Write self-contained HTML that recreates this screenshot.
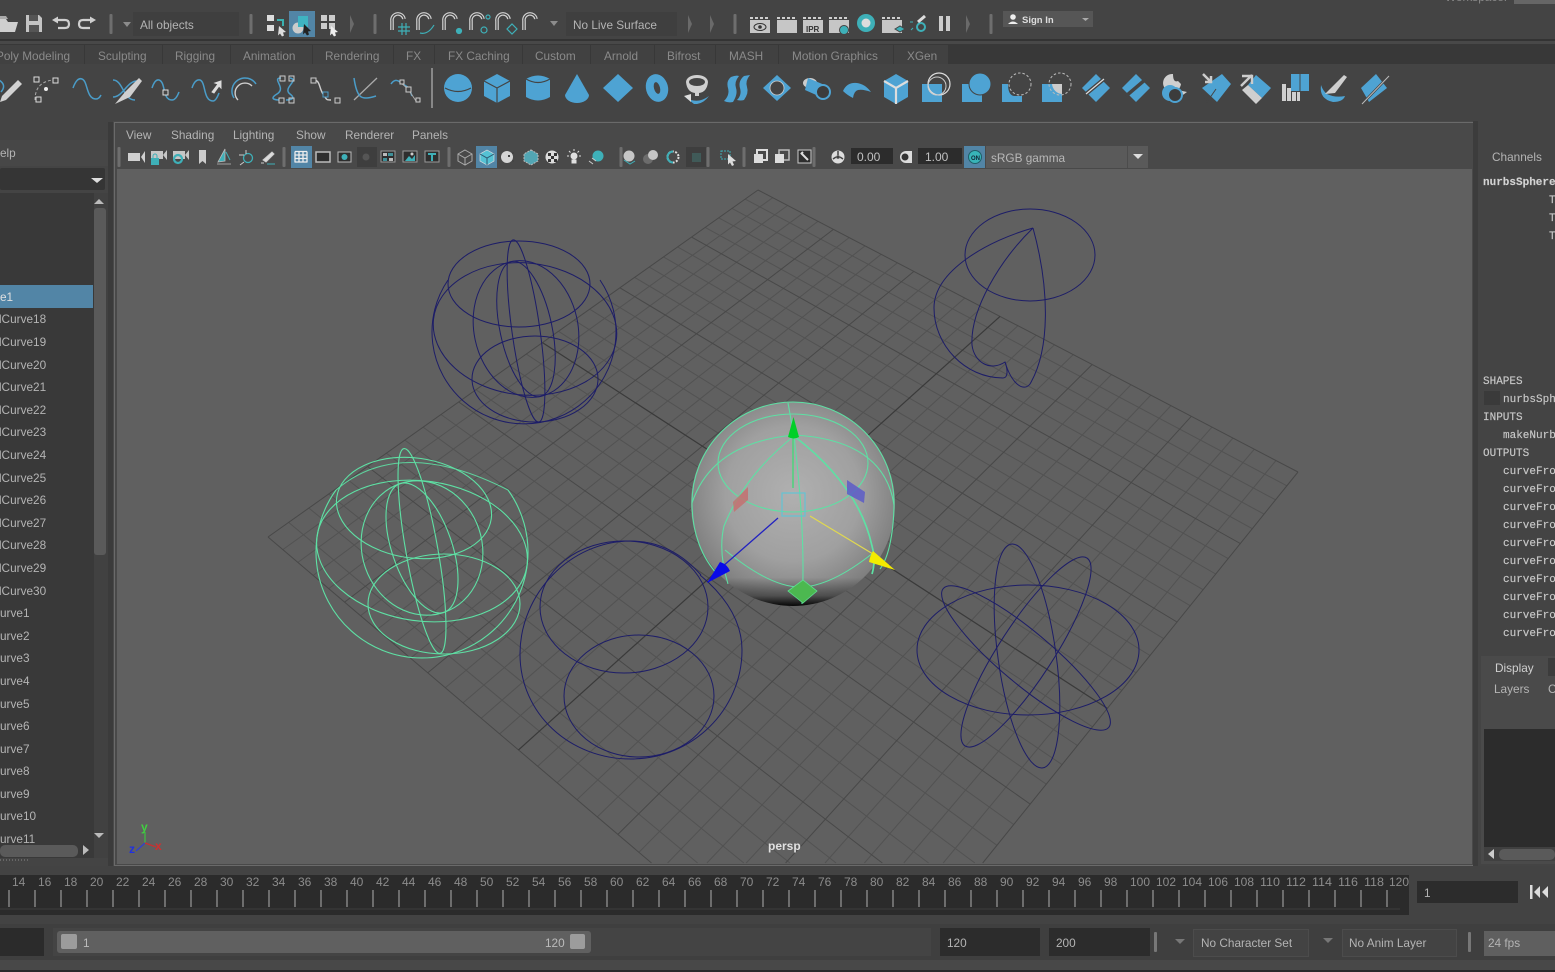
<!DOCTYPE html>
<html><head><meta charset="utf-8"><title>Maya</title>
<style>
html,body{margin:0;padding:0;width:1555px;height:972px;overflow:hidden;background:#444}
body>svg{display:block;position:absolute;left:0;top:0}
text{font-family:"Liberation Sans",sans-serif;font-size:11.8px;fill:#b4b4b4}
.m text,text.m{font-family:"Liberation Mono",monospace;font-size:11px;fill:#c8c8c8;stroke:#c8c8c8;stroke-width:.15}
.tab text{fill:#8a8a8a}
.tl text{font-size:12px;fill:#8c8c8c}
.b{fill:#4ea3d3}.w{fill:#cfcfcf}
.bs{fill:none;stroke:#4a9cc8;stroke-width:1.5}
.ws{fill:none;stroke:#cfcfcf;stroke-width:1.4}
.wire{fill:none;stroke:#1d1d68;stroke-width:1}
.gw{fill:none;stroke:#5ee0a4;stroke-width:1.1}
</style></head><body>
<svg width="1555" height="972" viewBox="0 0 1555 972" xmlns="http://www.w3.org/2000/svg">
<defs>
<radialGradient id="sg" cx=".5" cy=".45" r=".6"><stop offset="0" stop-color="#b0b0b0"/><stop offset=".55" stop-color="#a0a0a0"/><stop offset="1" stop-color="#747474"/></radialGradient>
<linearGradient id="sd" x1="0" y1="0" x2="0" y2="1"><stop offset=".86" stop-color="#000" stop-opacity="0"/><stop offset=".95" stop-color="#000" stop-opacity=".4"/><stop offset="1" stop-color="#000" stop-opacity=".95"/></linearGradient>
<g id="magnet"><g transform="translate(-2 -1)" fill="none"><path d="M-4 8V-1a6 6 0 0 1 12-2" stroke="#d2d2d2" stroke-width="3.600"/><path d="M-4 8V-1a6 6 0 0 1 12-2" stroke="#444" stroke-width="1.200"/></g></g>
<g id="clap"><path d="M-10-7h3v2h-3zM-5-7h3v2h-3zM0-7h3v2h-3zM5-7h3v2h-3z" fill="#cfcfcf"/><rect x="-10" y="-4" width="20" height="13" fill="#c6c6c6"/></g>
<g id="tri"><path d="M-4-2h8l-4 5z" fill="#8c8c8c"/></g>
<g id="sep"><rect x="-1.5" y="-10" width="3" height="20" rx="1" fill="#6e6e6e"/></g>
<g id="arr"><path d="M-2-9 2 0-2 9z" fill="#6a6a6a"/></g>
</defs>

<!-- base -->
<rect width="1555" height="972" fill="#444"/>
<rect y="39" width="1555" height="2" fill="#333"/>
<rect y="44" width="1555" height="20" fill="#383838"/>
<rect y="41" width="1555" height="3" fill="#484848"/>

<!-- top toolbar -->
<path d="M0 19h6l2 3h10l-3 10H0z" fill="#cfcfcf"/><path d="M0 16h6l2 3H0z" fill="#aaa"/>
<path d="M26 15h13l3 3v14H26z" fill="#c4c4c4"/><rect x="29" y="15" width="9" height="6" fill="#555"/><rect x="29" y="25" width="10" height="7" fill="#555"/>
<path d="M56 20h9q4 0 4 4t-4 4h-7" fill="none" stroke="#cfcfcf" stroke-width="2.2"/><path d="M52 20l6-3.500v7z" fill="#cfcfcf"/>
<path d="M92 20h-9q-4 0-4 4t4 4h7" fill="none" stroke="#cfcfcf" stroke-width="2.2"/><path d="M96 20l-6-3.500v7z" fill="#cfcfcf"/>
<use href="#sep" x="111" y="24"/><use href="#tri" x="127" y="24"/>
<rect x="133" y="12" width="106" height="24" fill="#3f3f3f"/><text x="140" y="29">All objects</text>
<use href="#sep" x="251" y="24"/>
<rect x="267" y="15" width="7" height="6" fill="#ddd"/><rect x="267" y="25" width="7" height="6" fill="#ddd"/><path d="M277 20h6v6" fill="none" stroke="#3ab0b0" stroke-width="2"/><path d="M279 26l7 6-3 .5 1 3-2 1-2-3-2 2z" fill="#ddd"/>
<rect x="289" y="11" width="26" height="26" fill="#5285a6"/><circle cx="298" cy="28" r="5.500" fill="#ccc"/><rect x="298" y="16" width="10" height="11" fill="#3fb4c2"/><path d="M304 24l7 7-3 .5 1 3-2 1-2-3-2 2z" fill="#222"/>
<path d="M321 15h6v6h-6zM329 15h6v6h-6zM321 23h6v6h-6zM329 23h6v6h-6z" fill="#ccc"/><path d="M331 26l7 6-3 .5 1 3-2 1-2-3-2 2z" fill="#eee"/>
<use href="#arr" x="352" y="24"/><use href="#sep" x="375" y="24"/>
<g fill="none" stroke-width="1.200" stroke="#3eb0b8">
<use href="#magnet" x="398" y="23"/><path d="M398 27h12M398 31h12M402 23v12M406 23v12"/>
<use href="#magnet" x="424" y="23"/><path d="M420 33q8 2 14-8"/>
<use href="#magnet" x="450" y="23"/><circle cx="459" cy="31" r="2.500" fill="#3eb0b8"/>
<use href="#magnet" x="477" y="23"/><circle cx="484" cy="30" r="3"/><circle cx="488" cy="17" r="2"/>
<use href="#magnet" x="503" y="23"/><path d="M507 29l5-5 5 5-5 5z"/>
<use href="#magnet" x="530" y="23"/></g>
<use href="#tri" x="554" y="23"/>
<rect x="566" y="12" width="111" height="24" fill="#3f3f3f"/><text x="573" y="29">No Live Surface</text>
<use href="#arr" x="690" y="24"/><use href="#arr" x="712" y="24"/><use href="#sep" x="735" y="24"/>
<use href="#clap" x="760" y="24"/><ellipse cx="760" cy="27" rx="6" ry="3.500" fill="none" stroke="#333"/><circle cx="760" cy="27" r="1.800" fill="#333"/>
<use href="#clap" x="787" y="24"/>
<use href="#clap" x="813" y="24"/><text x="806" y="32" style="font-size:8px;fill:#333;font-weight:bold">IPR</text>
<use href="#clap" x="839" y="24"/><circle cx="844" cy="30" r="4.500" fill="#3eb0b8" stroke="#444"/>
<circle cx="866" cy="23" r="9" fill="#3eb0b8"/><circle cx="866" cy="23" r="4.500" fill="#ddd"/>
<use href="#clap" x="892" y="24"/><path d="M895 29l5-3 5 3-5 3z" fill="#3eb0b8" stroke="#444"/>
<circle cx="921" cy="27" r="4" fill="none" stroke="#3eb0b8" stroke-width="2"/><path d="M918 22l7-6" stroke="#ddd" stroke-width="3"/><path d="M910 22h3M911 30l2-2" stroke="#3eb0b8"/>
<rect x="939" y="16" width="4" height="15" fill="#ccc"/><rect x="946" y="16" width="4" height="15" fill="#ccc"/>
<use href="#arr" x="968" y="24"/><use href="#sep" x="991" y="24"/>
<rect x="1003" y="11" width="90" height="16" fill="#565656"/><circle cx="1013" cy="17" r="2.800" fill="#eee"/><path d="M1008 24q5-5 10 0z" fill="#eee"/>
<text x="1022" y="23" style="font-size:9.500px;fill:#ddd;font-weight:bold">Sign In</text><path d="M1082 18h7l-3.500 3z" fill="#aaa"/>
<text x="1445" y="1" style="fill:#888">Workspace:</text><rect x="1514" y="0" width="41" height="4" fill="#666"/>

<!-- shelf tabs -->
<g fill="#414141"><rect x="0" y="45" width="84" height="19"/><rect x="85" y="45" width="77" height="19"/><rect x="163" y="45" width="67" height="19"/><rect x="231" y="45" width="81" height="19"/><rect x="313" y="45" width="80" height="19"/><rect x="394" y="45" width="40" height="19"/><rect x="435" y="45" width="87" height="19"/><rect x="523" y="45" width="67" height="19"/><rect x="591" y="45" width="63" height="19"/><rect x="655" y="45" width="60" height="19"/><rect x="716" y="45" width="62" height="19"/><rect x="779" y="45" width="114" height="19"/><rect x="894" y="45" width="54" height="19"/></g>
<g class="tab"><text x="-4" y="60">Poly Modeling</text><text x="98" y="60">Sculpting</text><text x="175" y="60">Rigging</text><text x="243" y="60">Animation</text><text x="325" y="60">Rendering</text><text x="406" y="60">FX</text><text x="448" y="60">FX Caching</text><text x="535" y="60">Custom</text><text x="604" y="60">Arnold</text><text x="667" y="60">Bifrost</text><text x="729" y="60">MASH</text><text x="792" y="60">Motion Graphics</text><text x="907" y="60">XGen</text></g>

<!-- shelf icons: curves -->
<path d="M-1 80q8 5 2 12" class="bs"/><path d="M2 96 18 80l4 4L6 100l-6 2z" fill="#d2d2d2"/>
<path d="M35 100q0-18 18-20" fill="none" stroke="#aaa" stroke-dasharray="3 2"/><rect x="34" y="77" width="5" height="5" fill="none" stroke="#ddd"/><rect x="53" y="78" width="5" height="5" fill="none" stroke="#ddd"/><rect x="36" y="97" width="5" height="5" fill="none" stroke="#ddd"/><circle cx="46" cy="89" r="2" fill="#eee"/>
<path d="M73 88q4-11 9-9c6 2 4 20 14 20q3 0 5-4" class="bs"/>
<path d="M113 80c10 0 10 20 22 20M113 97c10 0 14-16 24-16" class="bs"/><path d="M115 104l10-12 14-14 3 3-12 16z" fill="#cfcfcf"/>
<path d="M152 88q3-9 7-8c7 2 3 20 13 20q4 0 7-8" class="bs"/><rect x="163" y="90" width="5" height="5" fill="#444" stroke="#ddd"/>
<path d="M192 88q3-9 8-8c6 2 3 21 13 21q3 0 6-8" class="bs"/><path d="M212 92l6-8-3-1 6-2v7l-2-2-5 7z" fill="#ddd" stroke="#ddd"/>
<path d="M234 98a12 12 0 0 1 22-14" class="bs"/><path d="M238 100a9 9 0 0 1 14-14" class="ws"/>
<path d="M281 78c-10 0 6 10-4 16s2 6 2 6M290 78c10 2-8 10 0 16s-4 6-4 6" class="bs"/><g fill="none" stroke="#ccc"><rect x="280" y="76" width="5" height="5"/><rect x="289" y="76" width="5" height="5"/><rect x="279" y="98" width="5" height="5"/><rect x="289" y="98" width="5" height="5"/></g>
<path d="M314 80c6 0 5 8 9 14s3 6 8 6" class="ws"/><rect x="311" y="78" width="5" height="5" fill="#444" stroke="#ccc"/><rect x="323" y="92" width="5" height="5" fill="#444" stroke="#4a9cc8"/><rect x="335" y="98" width="5" height="5" fill="#444" stroke="#ccc"/>
<path d="M354 100 377 78" stroke="#aaa" stroke-width="1.300"/><path d="M354 78q2 14 6 18t16 0" class="bs"/>
<path d="M391 84q4-6 9-2l9 6 3 8" class="bs"/><path d="M400 82l8 7 8 12" fill="none" stroke="#aaa"/><g fill="#444" stroke="#ccc"><rect x="400" y="80" width="4" height="4"/><rect x="406" y="87" width="5" height="5"/><rect x="416" y="98" width="4" height="4"/></g>
<rect x="431" y="68" width="2" height="40" fill="#888"/>

<!-- primitives -->
<circle cx="458" cy="88" r="14" class="b"/><path d="M445 88q13 7 26 0" fill="none" stroke="#444" stroke-width="1.200"/>
<path d="M497 74l13 7v15l-13 7-13-7V81z" class="b"/><path d="M484 81l13 7 13-7M497 88v15" fill="none" stroke="#444" stroke-width="1.200"/>
<path d="M526 79q12-7 24 0v18q-12 7-24 0z" class="b"/><path d="M526 79q12 7 24 0" fill="none" stroke="#444" stroke-width="1.200"/>
<path d="M577 74l12 21a12 8 0 0 1-24 0z" class="b"/>
<path d="M618 74l15 14-15 14-15-14z" class="b"/>
<ellipse cx="657" cy="88" rx="11" ry="14" class="b" transform="rotate(-15 657 88)"/><ellipse cx="657" cy="88" rx="3" ry="6" fill="#444" transform="rotate(-15 657 88)"/>
<path d="M686 82a11 7 0 0 1 22 0q-1 10-9 11v3h-4v-3q-8-1-9-11z" fill="#cfcfcf"/><ellipse cx="697" cy="82" rx="8" ry="4" fill="#444"/><path d="M685 97q12 8 24-1-5 7-12 8l-3 0" fill="#4ea3d3"/><path d="M684 96l7-2v8z" fill="#ddd"/>
<path d="M724 101q6-6 4-13t3-11q5-2 8-1-5 6-3 12t-3 14q-5 1-9-1z" class="b"/><path d="M737 100q5-5 3-12t4-12l6-1q-5 6-3 12t-3 13q-3 1-7 0z" class="b"/>
<path d="M777 75l14 13-14 13-14-13z" class="b"/><circle cx="777" cy="88" r="7" fill="#444" stroke="#ccc" stroke-width=".8"/>
<ellipse cx="810" cy="83" rx="7" ry="5" fill="#ccc"/><path d="M808 78l19 8-4 12-18-8z" class="b"/><circle cx="823" cy="92" r="7" fill="#3c3c3c" stroke="#4ea3d3" stroke-width="2"/>
<path d="M843 91q4-9 14-8 8 1 14 9-8-3-13-2-4 1-5 8-6-3-10-7z" class="b"/>
<path d="M896 74l12 7v16l-12 7-12-7V81z" class="b"/><path d="M884 81l12 7 12-7M896 88v16" fill="none" stroke="#ddd" stroke-width="2.200"/>
<rect x="922" y="84" width="20" height="18" class="b"/><circle cx="939" cy="84" r="11" fill="none" stroke="#ddd" stroke-width="1.200"/><circle cx="937" cy="86" r="9" fill="none" stroke="#ccc"/>
<rect x="962" y="84" width="20" height="18" class="b"/><circle cx="980" cy="84" r="11" class="b" stroke="#444"/>
<path d="M1002 84v18h20v-6h-8q-6-1-6-12z" class="b"/><circle cx="1020" cy="84" r="11" fill="none" stroke="#bbb" stroke-dasharray="2.500 2"/>
<rect x="1042" y="84" width="20" height="18" class="b"/><path d="M1052 84h10v10a11 11 0 0 1-10-10z" fill="#ccc"/><circle cx="1060" cy="84" r="11" fill="none" stroke="#bbb" stroke-dasharray="2.500 2"/>
<path d="M1096 74l14 14-14 14-14-14z" class="b"/><path d="M1086 94l18-15" stroke="#444" stroke-width="4"/><path d="M1086 94l18-15" stroke="#ddd" stroke-width="1.200"/>
<path d="M1136 74l14 14-14 14-14-14z" class="b"/><path d="M1126 96l20-17" stroke="#444" stroke-width="3.500"/>
<path d="M1168 80a9 9 0 1 0 8 10l-3-3q-5 2-5-7z" fill="#cfcfcf" transform="translate(5 -6)"/><path d="M1178 90l9 2-7 5z" fill="#cfcfcf"/><circle cx="1170" cy="93" r="8" class="b"/><circle cx="1175" cy="95" r="7" fill="#3c3c3c" stroke="#4ea3d3" stroke-width="2"/>
<path d="M1222 74l9 10-14 18-15-14z" class="b"/><path d="M1216 89l-9 13-6-10" fill="none" stroke="#444"/><path d="M1203 74l8 8m0-6v6h-6" fill="none" stroke="#ccc" stroke-width="2.500"/>
<path d="M1256 75l15 13-9 10-14-13z" class="b"/><path d="M1248 85l14 13-6 6-14-14z" fill="#cfcfcf"/><path d="M1254 72l-11 11m1-10h10v8" fill="none" stroke="#ccc" stroke-width="2.400" transform="translate(-2 3)"/>
<rect x="1291" y="74" width="18" height="17" class="b"/><path d="M1300 74v17" stroke="#444"/><path d="M1282 84h4v17h-4zM1287 88h4v13h-4zM1292 92h4v9h-4zM1297 92h3v9h-3z" fill="#cfcfcf"/>
<path d="M1321 85q-2 14 12 17 10 0 12-6-10 2-18-2-4-3-6-9z" class="b"/><path d="M1325 94l5-5 14-14 3 2-12 16z" fill="#cfcfcf"/>
<path d="M1376 74l-15 14 8 14 18-14z" class="b"/><path d="M1362 104l27-28" stroke="#444" stroke-width="2.500"/><path d="M1362 104l27-28" stroke="#bbb"/>

<!-- left panel -->
<rect x="0" y="140" width="108" height="26" fill="#474747"/>
<text x="0" y="157">elp</text>
<rect x="0" y="168" width="105" height="22" rx="2" fill="#353535"/><path d="M91 178h12l-6 5z" fill="#ddd"/>
<rect x="0" y="193" width="108" height="665" fill="#393939"/>
<rect x="94" y="193" width="14" height="665" fill="#414141"/>
<path d="M94 204h10l-5-5z" fill="#bbb"/><rect x="94" y="208" width="12" height="347" rx="3" fill="#5a5a5a"/>
<path d="M94 833h10l-5 5z" fill="#bbb"/>
<rect x="0" y="285" width="93" height="23" fill="#5285a6"/>
<rect x="0" y="845" width="78" height="12" rx="5" fill="#5a5a5a"/><path d="M83 845l6 5-6 5z" fill="#bbb"/>
<g><text x="0" y="301" style="fill:#e0e0e0">e1</text>
<text x="-5" y="323">dCurve18</text><text x="-5" y="346">dCurve19</text><text x="-5" y="369">dCurve20</text><text x="-5" y="391">dCurve21</text><text x="-5" y="414">dCurve22</text><text x="-5" y="436">dCurve23</text><text x="-5" y="459">dCurve24</text><text x="-5" y="482">dCurve25</text><text x="-5" y="504">dCurve26</text><text x="-5" y="527">dCurve27</text><text x="-5" y="549">dCurve28</text><text x="-5" y="572">dCurve29</text><text x="-5" y="595">dCurve30</text>
<text x="0" y="617">urve1</text><text x="0" y="640">urve2</text><text x="0" y="662">urve3</text><text x="0" y="685">urve4</text><text x="0" y="708">urve5</text><text x="0" y="730">urve6</text><text x="0" y="753">urve7</text><text x="0" y="775">urve8</text><text x="0" y="798">urve9</text><text x="0" y="820">urve10</text><text x="0" y="843">urve11</text></g>
<path d="M0 860h30" stroke="#8a8a8a" stroke-dasharray="1 2"/>
<rect x="108" y="122" width="5" height="748" fill="#3b3b3b"/>

<!-- viewport frame -->
<rect x="113" y="121" width="1362" height="746" fill="#494949"/>
<rect x="114.500" y="122.500" width="1359" height="743" fill="none" stroke="#6a6a6a"/>
<text x="126" y="139">View</text><text x="171" y="139">Shading</text><text x="233" y="139">Lighting</text><text x="296" y="139">Show</text><text x="345" y="139">Renderer</text><text x="412" y="139">Panels</text>

<!-- panel toolbar -->
<use href="#sep" x="119" y="157"/>
<g>
<rect x="128" y="153" width="12" height="8" fill="#d0d0d0"/><path d="M145 151v12l-4-6z" fill="#d0d0d0"/>
<rect x="151" y="151" width="12" height="8" fill="#c6c6c6"/><path d="M167 150v10l-4-5z" fill="#c6c6c6"/><rect x="151" y="158" width="8" height="7" fill="#3eb0b8"/><path d="M153 158v-2a2 2 0 0 1 4 0v2" fill="none" stroke="#3eb0b8"/>
<rect x="173" y="151" width="12" height="8" fill="#c6c6c6"/><path d="M189 150v10l-4-5z" fill="#c6c6c6"/><circle cx="178" cy="159" r="4" fill="none" stroke="#3eb0b8" stroke-width="2.200"/>
<path d="M199 150h7v14l-3.500-3-3.500 3z" fill="#ccc"/>
<path d="M218 162l7-13v12zM217 164h14" fill="#3eb0b8" stroke="#bbb" stroke-width=".8"/><path d="M226 152l4 8" stroke="#3eb0b8"/>
<circle cx="248" cy="158" r="4.500" fill="none" stroke="#3eb0b8" stroke-width="1.300"/><path d="M244 162l-4 3M239 155h5M246 150v4" stroke="#ccc"/>
<path d="M263 160l9-8 2 2-8 8zM261 163h3" fill="#ddd" stroke="#ccc"/><path d="M267 164h8" stroke="#3eb0b8"/>
</g>
<use href="#sep" x="284" y="157"/>
<rect x="291" y="146" width="21" height="22" fill="#5285a6"/>
<path d="M295 151.500h12M295 155h12M295 158.500h12M295 162h12M295 151.500v11M299 151.500v11M303 151.500v11M307 151.500v11" stroke="#eee" stroke-width="1.300" fill="none"/>
<rect x="316" y="152" width="14" height="10" fill="#2e2e2e" stroke="#bbb" stroke-width="1.500"/>
<rect x="338" y="152" width="13" height="10" fill="#2e2e2e" stroke="#bbb"/><circle cx="344.500" cy="157" r="3" fill="#3eb0b8"/>
<rect x="357" y="147" width="20" height="20" fill="#3e3e3e"/><circle cx="366" cy="157" r="3.500" fill="#555"/>
<rect x="381" y="151" width="14" height="11" fill="#2e2e2e" stroke="#999"/><path d="M383 153h4v3h-4zM389 158h4v3h-4z" fill="#bbb"/><path d="M388 153h5v3h-5zM383 158h4v3h-4z" fill="#3e8f98"/>
<rect x="403" y="151" width="14" height="11" fill="#2e2e2e" stroke="#999"/><path d="M405 161l4-5 3 3 3-4v6z" fill="#3eb0b8"/><circle cx="412" cy="154" r="1.500" fill="#ccc"/>
<rect x="425" y="151" width="14" height="11" fill="#2e2e2e" stroke="#999"/><path d="M428 153h8v2h-3v6h-2v-6h-3z" fill="#3eb0b8"/>
<use href="#sep" x="449" y="157"/>
<path d="M465 150l7 4v7l-7 4-7-4v-7zM458 154l7 4 7-4M465 158v7" fill="none" stroke="#aaa"/>
<rect x="476" y="146" width="21" height="22" fill="#5285a6"/><path d="M487 150l7 4v7l-7 4-7-4v-7z" fill="#55c2d4" stroke="#ddd" stroke-width=".7"/><path d="M480 154l7 4 7-4M487 158v7" fill="none" stroke="#2d5870"/>
<circle cx="507" cy="157" r="6" fill="#d6d6d6"/><path d="M508 155h2v2h-2zM512 152h2v2h-2zM512 160h2v2h-2z" fill="#444"/>
<path d="M531 150l7 4v7l-7 4-7-4v-7z" fill="#52a6b4" stroke="#bbb" stroke-dasharray="2 1"/>
<circle cx="552" cy="157" r="6.500" fill="#ddd"/><path d="M548 153h3v3h-3zM554 153h3v3h-3zM551 156h3v3h-3zM548 159h3v3h-3zM554 159h3v3h-3z" fill="#333"/>
<circle cx="574" cy="156" r="3.500" fill="#e0e0e0"/><path d="M574 149v2M567 156h2M579 156h2M569 151l1.500 1.500M579 151l-1.500 1.500M572 160h4v3h-4z" stroke="#e0e0e0" fill="#e0e0e0"/>
<circle cx="598" cy="156" r="5.500" fill="#3eb0b8"/><path d="M589 161l4 3M592 158l4 3" stroke="#ccc"/>
<use href="#sep" x="621" y="157"/>
<circle cx="629" cy="156" r="5.500" fill="#c6c6c6"/><path d="M624 160l6 4 5-3" stroke="#3eb0b8" fill="none"/>
<circle cx="648" cy="159" r="5" fill="#6c6c6c"/><circle cx="653" cy="155" r="5" fill="#c6c6c6"/>
<circle cx="673" cy="157" r="5.500" fill="none" stroke="#ddd" stroke-width="2" stroke-dasharray="2 1.500"/><path d="M673 151.500a5.500 5.500 0 0 0 0 11" fill="none" stroke="#3eb0b8" stroke-width="2"/>
<rect x="686" y="147" width="20" height="20" fill="#3e3e3e"/><rect x="692" y="153" width="9" height="9" fill="#405a58"/>
<use href="#sep" x="708" y="157"/>
<rect x="721" y="151" width="9" height="8" fill="none" stroke="#3eb0b8" stroke-dasharray="2 1"/><path d="M728 154l8 7-3.500 .5 1.500 3.500-2 1-2-3.500-2 2z" fill="#ddd"/>
<use href="#sep" x="744" y="157"/>
<rect x="757" y="150" width="10" height="10" fill="none" stroke="#ddd" stroke-width="2"/><rect x="754" y="154" width="9" height="9" fill="#ddd"/>
<rect x="779" y="150" width="10" height="10" fill="none" stroke="#bbb" stroke-width="1.500"/><rect x="775" y="154" width="9" height="9" fill="#ddd"/>
<rect x="798" y="150" width="13" height="13" fill="#2e2e2e" stroke="#ccc"/><path d="M801 153l7 7M803 152l-2 2" stroke="#ddd" stroke-width="2"/>
<use href="#sep" x="814" y="157"/>
<circle cx="838" cy="157" r="6.500" fill="#ddd"/><path d="M838 151v4M843 159l-3-2M833 159l3-2" stroke="#444" stroke-width="1.500"/><circle cx="838" cy="157" r="1.800" fill="#444"/>
<rect x="851" y="148" width="42" height="16" fill="#2c2c2c"/><text x="857" y="161" style="fill:#c0c0c0;font-size:12px">0.00</text>
<path d="M906 151h6v12h-6a6 6 0 0 1 0-12z" fill="#ddd"/><circle cx="905" cy="157" r="3.500" fill="#333"/>
<rect x="918" y="148" width="44" height="16" fill="#2c2c2c"/><text x="925" y="161" style="fill:#c0c0c0;font-size:12px">1.00</text>
<rect x="964" y="146" width="21" height="22" fill="#5285a6"/><circle cx="975" cy="157" r="6.500" fill="#38b4b8" stroke="#1f5f68"/><text x="971" y="160" style="font-size:6px;fill:#123;font-weight:bold">ON</text>
<rect x="986" y="146" width="162" height="22" fill="#5a5a5a"/><rect x="1127" y="146" width="1" height="22" fill="#4c4c4c"/>
<text x="991" y="162" style="fill:#b8b8b8">sRGB gamma</text><path d="M1133 154h10l-5 5z" fill="#ddd"/>

<!-- 3D view -->
<svg x="117" y="169" width="1355" height="695" viewBox="117 169 1355 695">
<rect x="117" y="169" width="1355" height="695" fill="#606060"/>
<path id="gridM" fill="none" stroke="#525252" stroke-width="1"/>
<path id="gridJ" fill="none" stroke="#484848" stroke-width="1"/>
<path id="gridA" fill="none" stroke="#3a3a3a" stroke-width="1.200"/>

<!-- blue wire sphere -->
<g class="wire">
<ellipse cx="519" cy="284" rx="71" ry="43"/>
<ellipse cx="535" cy="379" rx="63" ry="43"/>
<ellipse cx="525" cy="329" rx="92" ry="66" transform="rotate(6 525 329)"/>
<path d="M448 280A92 92 0 1 0 600 280"/>
<ellipse cx="526" cy="331" rx="14" ry="92" transform="rotate(-8 526 331)"/>
<ellipse cx="526" cy="329" rx="52" ry="69" transform="rotate(-12 526 329)"/>
<ellipse cx="526" cy="329" rx="26" ry="69" transform="rotate(-12 526 329)"/>
</g>
<!-- green wire sphere -->
<g class="gw">
<ellipse cx="414" cy="508" rx="78" ry="50" transform="rotate(8 414 508)"/>
<ellipse cx="444" cy="604" rx="76" ry="50"/>
<ellipse cx="422" cy="551" rx="106" ry="70" transform="rotate(8 422 551)"/>
<path d="M336 490A106 106 0 1 0 508 490"/>
<path d="M336 490Q400 435 508 490" opacity=".9"/>
<ellipse cx="422" cy="551" rx="16" ry="104" transform="rotate(-10 422 551)"/>
<ellipse cx="422" cy="548" rx="60" ry="68" transform="rotate(-19 422 548)"/>
<ellipse cx="422" cy="548" rx="30" ry="68" transform="rotate(-19 422 548)"/>
</g>
<!-- top right curves -->
<g class="wire">
<ellipse cx="1030" cy="255" rx="65" ry="46"/>
<path d="M1033 228C990 240 934 270 934 308 934 345 965 378 1003 378 1008 378 1008 370 1005 362 990 372 974 362 972 345 970 310 1000 260 1033 228"/>
<path d="M1033 228C1050 290 1050 350 1030 384 1024 392 1012 385 1005 362"/>
</g>
<!-- rings -->
<g class="wire">
<ellipse cx="624" cy="607" rx="84" ry="66"/>
<ellipse cx="639" cy="696" rx="75" ry="61"/>
<path d="M700 575q42 35 42 75c0 60-50 109-111 109s-111-45-111-105c0-60 50-113 111-113q40 0 70 34"/>
</g>
<!-- bottom right star -->
<g class="wire">
<ellipse cx="1028" cy="650" rx="111" ry="65"/>
<ellipse cx="1027" cy="656" rx="29" ry="113" transform="rotate(-8 1027 656)"/>
<ellipse cx="1026" cy="652" rx="27" ry="112" transform="rotate(33 1026 652)"/>
<ellipse cx="1026" cy="658" rx="26" ry="108" transform="rotate(-50 1026 658)"/>
</g>
<!-- centre sphere -->
<circle cx="793" cy="504" r="102" fill="url(#sg)"/>
<circle cx="793" cy="504" r="102" fill="url(#sd)"/>
<g class="gw" stroke-width="1.200">
<path d="M692 503a101 101 0 0 1 202 0c0 15-2 50-14 66"/>
<path d="M692 503c0 30 10 55 26 72"/>
<ellipse cx="793" cy="463" rx="75" ry="49"/>
<path d="M692 503q20-60 102-68 90 5 100 70"/>
<path d="M725 550Q770 587 800 587T873 553"/>
<path d="M794 436q-50 40-70 90-6 25 4 58"/>
<path d="M794 436q65 50 78 110 4 15 0 28" stroke-width="1.700"/>
<path d="M794 436q12 100 8 168M788 403l6 33"/>
</g>
<!-- manipulator -->
<path d="M793 438V488" stroke="#4cd47c" stroke-width="1.500"/>
<path d="M793.500 417l5.500 20q-5 3-11 0z" fill="#00d028"/>
<rect x="782" y="493" width="23" height="23" fill="none" stroke="#62c4d4" stroke-width="1.200"/>
<path d="M733 502l15-15v13l-14 12z" fill="#c86a6a" opacity=".75"/>
<path d="M847 480l18 12-1 11-17-9z" fill="#5c5cc8" opacity=".85"/>
<path d="M778 518l-56 49" stroke="#2222c0" stroke-width="1.300"/>
<path d="M707 583l13-21q7 2 10 9z" fill="#0a0ae8"/>
<path d="M810 516l63 38" stroke="#e0d850" stroke-width="1.300"/>
<path d="M895 570l-22-19q-3 5-4 11z" fill="#f4ec00"/>
<path d="M788 591l15-11 14 11-14 12z" fill="#4cb850" stroke="#5edc90" stroke-width=".8"/>
<!-- view cube axes -->
<path d="M145 843v-11" stroke="#3ec040" stroke-width="1.200"/><path d="M145 843l-9 8" stroke="#3040d0" stroke-width="1.200"/><path d="M145 843l11 4" stroke="#c83030" stroke-width="1.200"/>
<text x="141" y="831" style="fill:#40d040;font-weight:bold;font-size:12px">y</text>
<text x="129" y="853" style="fill:#2030e0;font-weight:bold;font-size:12px">z</text>
<text x="155" y="850" style="fill:#d03030;font-weight:bold;font-size:12px">x</text>
<text x="768" y="850" style="fill:#e0e0e0;font-weight:bold;font-size:12px">persp</text>
</svg>

<!-- right panel -->
<rect x="1475" y="110" width="80" height="760" fill="#444"/>
<rect x="1473" y="121" width="5" height="749" fill="#3c3c3c"/>
<text x="1492" y="161">Channels</text>
<g class="m"><text x="1483" y="185" style="font-weight:bold;fill:#d4d4d4">nurbsSphere</text>
<text x="1549" y="203">T</text><text x="1549" y="221">T</text><text x="1549" y="239">T</text>
<text x="1483" y="384">SHAPES</text><rect x="1484" y="391" width="16" height="14" fill="#3a3a3a"/><text x="1503" y="402">nurbsSph</text>
<text x="1483" y="420">INPUTS</text><text x="1503" y="438">makeNurb</text><text x="1483" y="456">OUTPUTS</text>
<text x="1503" y="474">curveFro</text><text x="1503" y="492">curveFro</text><text x="1503" y="510">curveFro</text><text x="1503" y="528">curveFro</text><text x="1503" y="546">curveFro</text><text x="1503" y="564">curveFro</text><text x="1503" y="582">curveFro</text><text x="1503" y="600">curveFro</text><text x="1503" y="618">curveFro</text><text x="1503" y="636">curveFro</text></g>
<rect x="1481" y="656" width="74" height="208" fill="#4a4a4a"/>
<rect x="1548" y="658" width="7" height="18" fill="#3c3c3c"/>
<text x="1495" y="672" style="fill:#d0d0d0">Display</text><text x="1494" y="693">Layers</text><text x="1548" y="693">C</text>
<rect x="1484" y="729" width="71" height="118" fill="#2c2c2c"/>
<rect x="1484" y="847" width="71" height="14" fill="#404040"/><path d="M1494 849v10l-6-5z" fill="#ccc"/><rect x="1499" y="849" width="56" height="11" rx="5" fill="#5a5a5a"/>

<!-- timeline -->
<rect y="866" width="1555" height="104" fill="#434343"/>
<rect y="875" width="1409" height="40" fill="#2b2b2b"/>
<rect y="908" width="1400" height="2" fill="#343434"/>
<path d="M9 890v17M35 890v17M61 890v17M87 890v17M113 890v17M139 890v17M165 890v17M191 890v17M217 890v17M243 890v17M269 890v17M295 890v17M321 890v17M347 890v17M373 890v17M399 890v17M425 890v17M451 890v17M477 890v17M503 890v17M529 890v17M555 890v17M581 890v17M607 890v17M633 890v17M659 890v17M685 890v17M711 890v17M737 890v17M763 890v17M789 890v17M815 890v17M841 890v17M867 890v17M893 890v17M919 890v17M945 890v17M971 890v17M997 890v17M1023 890v17M1049 890v17M1075 890v17M1101 890v17M1127 890v17M1153 890v17M1179 890v17M1205 890v17M1231 890v17M1257 890v17M1283 890v17M1309 890v17M1335 890v17M1361 890v17M1387 890v17" stroke="#8a8a8a" stroke-width="1.400"/>
<g class="tl"><text x="12" y="886">14</text><text x="38" y="886">16</text><text x="64" y="886">18</text><text x="90" y="886">20</text><text x="116" y="886">22</text><text x="142" y="886">24</text><text x="168" y="886">26</text><text x="194" y="886">28</text><text x="220" y="886">30</text><text x="246" y="886">32</text><text x="272" y="886">34</text><text x="298" y="886">36</text><text x="324" y="886">38</text><text x="350" y="886">40</text><text x="376" y="886">42</text><text x="402" y="886">44</text><text x="428" y="886">46</text><text x="454" y="886">48</text><text x="480" y="886">50</text><text x="506" y="886">52</text><text x="532" y="886">54</text><text x="558" y="886">56</text><text x="584" y="886">58</text><text x="610" y="886">60</text><text x="636" y="886">62</text><text x="662" y="886">64</text><text x="688" y="886">66</text><text x="714" y="886">68</text><text x="740" y="886">70</text><text x="766" y="886">72</text><text x="792" y="886">74</text><text x="818" y="886">76</text><text x="844" y="886">78</text><text x="870" y="886">80</text><text x="896" y="886">82</text><text x="922" y="886">84</text><text x="948" y="886">86</text><text x="974" y="886">88</text><text x="1000" y="886">90</text><text x="1026" y="886">92</text><text x="1052" y="886">94</text><text x="1078" y="886">96</text><text x="1104" y="886">98</text><text x="1130" y="886" textLength="20" lengthAdjust="spacingAndGlyphs">100</text><text x="1156" y="886" textLength="20" lengthAdjust="spacingAndGlyphs">102</text><text x="1182" y="886" textLength="20" lengthAdjust="spacingAndGlyphs">104</text><text x="1208" y="886" textLength="20" lengthAdjust="spacingAndGlyphs">106</text><text x="1234" y="886" textLength="20" lengthAdjust="spacingAndGlyphs">108</text><text x="1260" y="886" textLength="20" lengthAdjust="spacingAndGlyphs">110</text><text x="1286" y="886" textLength="20" lengthAdjust="spacingAndGlyphs">112</text><text x="1312" y="886" textLength="20" lengthAdjust="spacingAndGlyphs">114</text><text x="1338" y="886" textLength="20" lengthAdjust="spacingAndGlyphs">116</text><text x="1364" y="886" textLength="20" lengthAdjust="spacingAndGlyphs">118</text><text x="1389" y="886" textLength="20" lengthAdjust="spacingAndGlyphs">120</text></g>
<rect x="1417" y="881" width="101" height="22" fill="#2c2c2c"/><text x="1424" y="897">1</text>
<rect x="1530" y="885" width="2.500" height="14" fill="#ddd"/><path d="M1540 886v12l-6-6zM1548 886v12l-6-6z" fill="#ddd"/>
<!-- range row -->
<rect y="924" width="1555" height="36" fill="#3f3f3f"/>
<rect x="0" y="928" width="44" height="28" fill="#2b2b2b"/>
<rect x="53" y="928" width="878" height="28" fill="#444"/>
<rect x="57" y="931" width="534" height="22" rx="3" fill="#606060"/>
<rect x="61" y="934" width="16" height="15" rx="2" fill="#9c9c9c"/><text x="83" y="947" style="fill:#bbb">1</text>
<text x="545" y="947" style="fill:#bbb">120</text><rect x="570" y="934" width="15" height="15" rx="2" fill="#9c9c9c"/>
<rect x="940" y="928" width="100" height="28" fill="#2c2c2c"/><text x="947" y="947">120</text>
<rect x="1049" y="928" width="101" height="28" fill="#2c2c2c"/><text x="1056" y="947">200</text>
<rect x="1154" y="932" width="3" height="20" rx="1" fill="#777"/>
<path d="M1175 939h10l-5 5z" fill="#777"/>
<rect x="1193.500" y="929.500" width="115" height="27" fill="#434343" stroke="#4c4c4c"/><text x="1201" y="947">No Character Set</text>
<path d="M1323 938h10l-5 5z" fill="#777"/>
<rect x="1342.500" y="929.500" width="114" height="27" fill="#434343" stroke="#4c4c4c"/><text x="1349" y="947">No Anim Layer</text>
<rect x="1468" y="932" width="3" height="20" rx="1" fill="#777"/>
<rect x="1484" y="931" width="71" height="25" fill="#5f5f5f"/><text x="1488" y="947">24 fps</text>
<rect y="960" width="1555" height="10" fill="#484848"/><rect y="970" width="1555" height="2" fill="#2a2a2a"/>
</svg>
<script>
(function(){
var P=[[268,537],[758,190],[1298,472],[848,1030]];
var x0=P[0][0],y0=P[0][1],x1=P[1][0],y1=P[1][1],x2=P[2][0],y2=P[2][1],x3=P[3][0],y3=P[3][1];
var sx=x0-x1+x2-x3,sy=y0-y1+y2-y3,dx1=x1-x2,dx2=x3-x2,dy1=y1-y2,dy2=y3-y2,den=dx1*dy2-dx2*dy1;
var g=(sx*dy2-dx2*sy)/den,h=(dx1*sy-sx*dy1)/den;
var a=x1-x0+g*x1,b=x3-x0+h*x3,c=x0,d=y1-y0+g*y1,e=y3-y0+h*y3,f=y0;
function p(u,v){var w=g*u+h*v+1;return [(a*u+b*v+c)/w,(d*u+e*v+f)/w];}
var YM=863;
function seg(A,B){
 if(A[1]>YM&&B[1]>YM)return '';
 if(A[1]>YM){var t=(YM-B[1])/(A[1]-B[1]);A=[B[0]+(A[0]-B[0])*t,YM];}
 if(B[1]>YM){var t2=(YM-A[1])/(B[1]-A[1]);B=[A[0]+(B[0]-A[0])*t2,YM];}
 return 'M'+A[0].toFixed(1)+' '+A[1].toFixed(1)+'L'+B[0].toFixed(1)+' '+B[1].toFixed(1);
}
var m='',j='',ax='',n=30;
for(var i=0;i<=n;i++){var t=i/n;
 var s=seg(p(t,0),p(t,1))+seg(p(0,t),p(1,t));
 if(i==15){ax+=s}else if(i%5==0){j+=s}else{m+=s}
}
document.getElementById('gridM').setAttribute('d',m);
document.getElementById('gridJ').setAttribute('d',j);
document.getElementById('gridA').setAttribute('d',ax);
})();
</script>
</body></html>
